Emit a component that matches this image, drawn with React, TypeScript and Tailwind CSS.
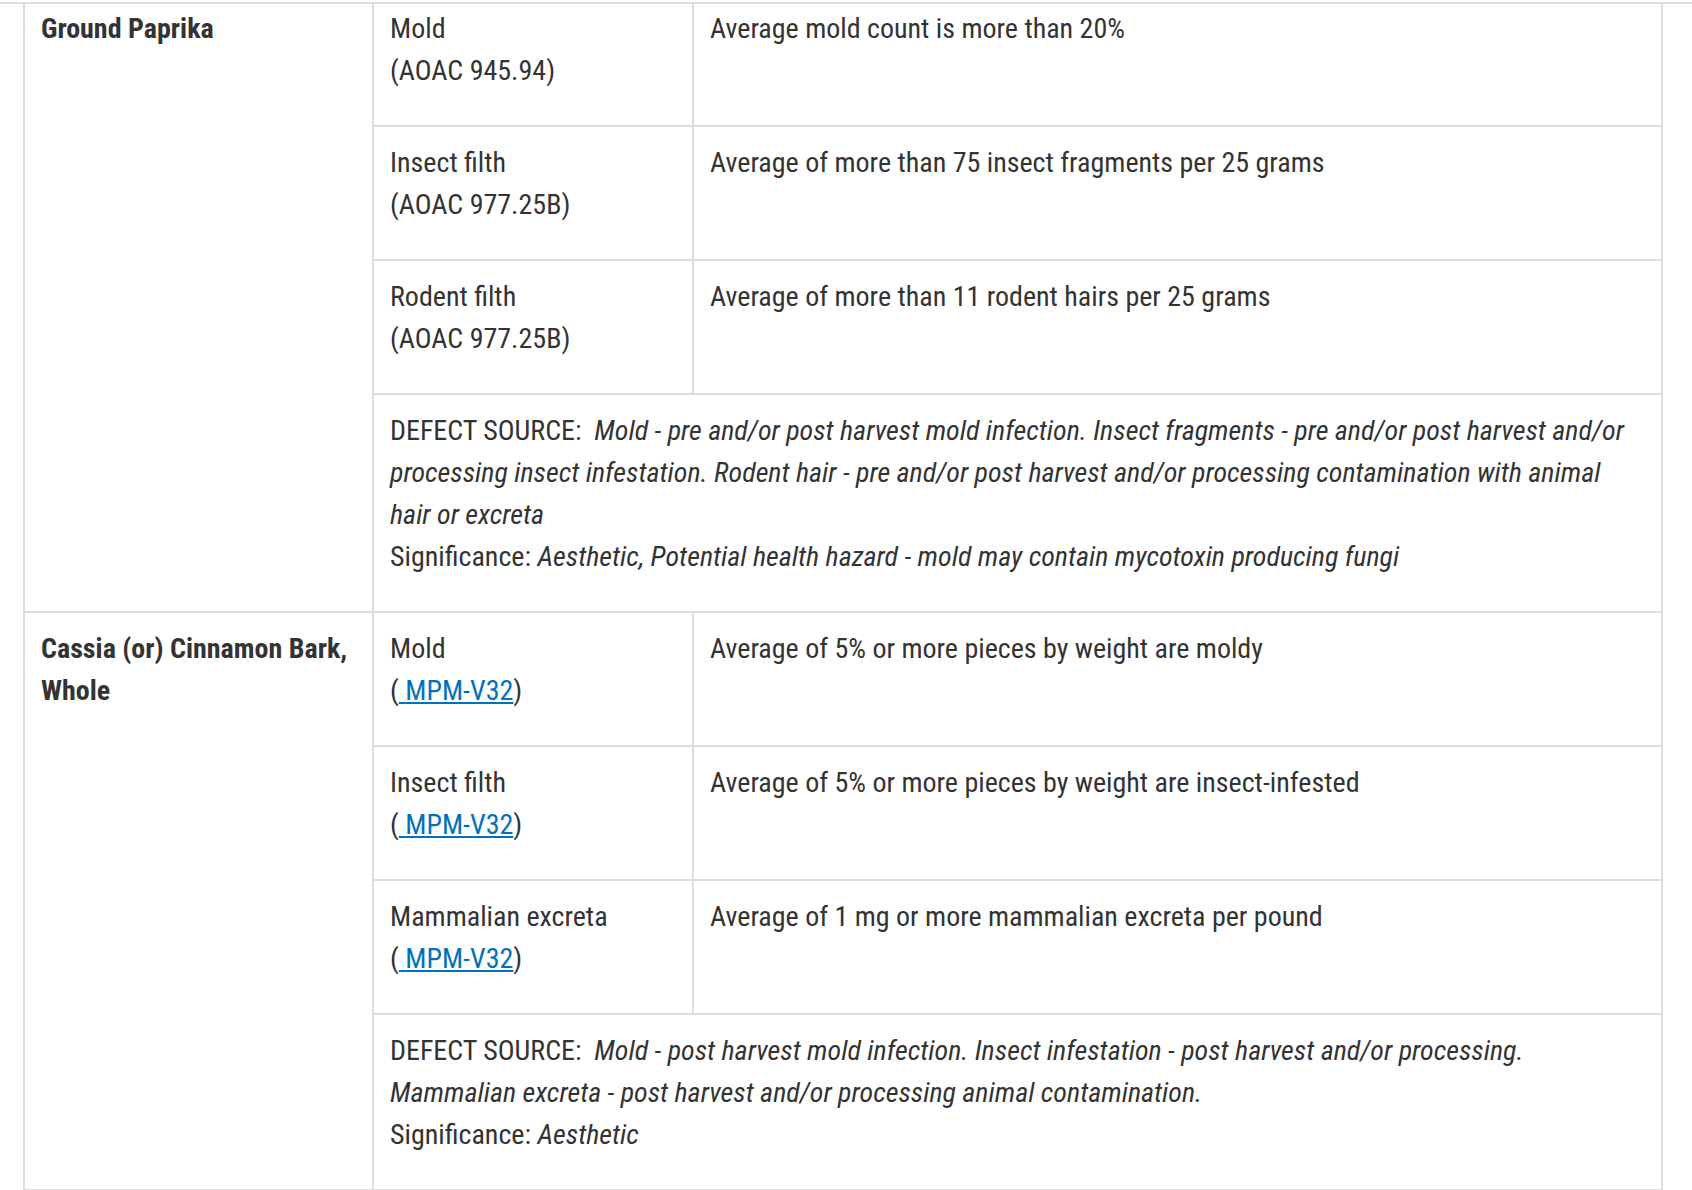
import React from 'react';

type Sub = { name: string; method: string; link?: boolean; action: string };
type Item = { food: string; subs: Sub[]; source: string; significance: string };

const items: Item[] = [
  {
    food: 'Ground Paprika',
    subs: [
      { name: 'Mold', method: 'AOAC 945.94', action: 'Average mold count is more than 20%' },
      { name: 'Insect filth', method: 'AOAC 977.25B', action: 'Average of more than 75 insect fragments per 25 grams' },
      { name: 'Rodent filth', method: 'AOAC 977.25B', action: 'Average of more than 11 rodent hairs per 25 grams' },
    ],
    source:
      'Mold - pre and/or post harvest mold infection. Insect fragments - pre and/or post harvest and/or processing insect infestation. Rodent hair - pre and/or post harvest and/or processing contamination with animal hair or excreta',
    significance: 'Aesthetic, Potential health hazard - mold may contain mycotoxin producing fungi',
  },
  {
    food: 'Cassia (or) Cinnamon Bark, Whole',
    subs: [
      { name: 'Mold', method: 'MPM-V32', link: true, action: 'Average of 5% or more pieces by weight are moldy' },
      { name: 'Insect filth', method: 'MPM-V32', link: true, action: 'Average of 5% or more pieces by weight are insect-infested' },
      { name: 'Mammalian excreta', method: 'MPM-V32', link: true, action: 'Average of 1 mg or more mammalian excreta per pound' },
    ],
    source:
      'Mold - post harvest mold infection. Insect infestation - post harvest and/or processing. Mammalian excreta - post harvest and/or processing animal contamination.',
    significance: 'Aesthetic',
  },
];

const cell = 'border-2 border-[#dddddd] align-top px-[16px] pb-[33px]';

export default function App() {
  return (
    <div className="min-h-screen bg-white text-[#333333] font-['Roboto_Condensed','Roboto',sans-serif] [font-stretch:condensed] text-[28px] leading-[42px]">
      <div className="h-[2px] bg-[#dddddd] mt-[2px]" />
      <table className="ml-[23px] w-[1640px] table-fixed border-collapse">
        <colgroup>
          <col className="w-[349px]" />
          <col className="w-[320px]" />
          <col />
        </colgroup>
        <tbody>
          {items.map((item, i) => (
            <React.Fragment key={item.food}>
              {item.subs.map((s, j) => {
                const pt = i === 0 && j === 0 ? 'pt-[4px] border-t-0' : 'pt-[15px]';
                return (
                  <tr key={s.name}>
                    {j === 0 && (
                      <td rowSpan={4} className={`${cell} ${pt} font-bold`}>
                        {item.food}
                      </td>
                    )}
                    <td className={`${cell} ${pt}`}>
                      {s.name}
                      <br />
                      {s.link ? (
                        <>
                          (<a href="#" className="text-[#0071bc] underline">&nbsp;{s.method}</a>)
                        </>
                      ) : (
                        <>({s.method})</>
                      )}
                    </td>
                    <td className={`${cell} ${pt}`}>{s.action}</td>
                  </tr>
                );
              })}
              <tr>
                <td colSpan={2} className={`${cell} pt-[15px]`}>
                  DEFECT SOURCE:&nbsp; <em>{item.source}</em>
                  <br />
                  Significance: <em>{item.significance}</em>
                </td>
              </tr>
            </React.Fragment>
          ))}
        </tbody>
      </table>
    </div>
  );
}
